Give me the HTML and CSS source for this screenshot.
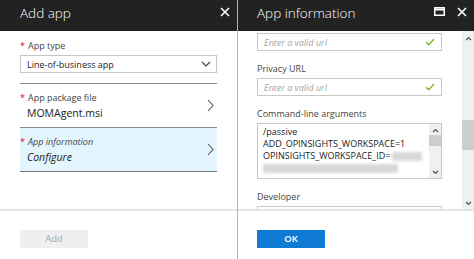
FILE: index.html
```html
<!DOCTYPE html>
<html lang="en">
<head>
  <meta charset="UTF-8" />
  <title>Add app</title>
  <link rel="stylesheet" href="styles.css">
</head>
<body>
  <div class="blades">
    <!-- left blade -->
    <div class="blade left">
      <div class="head">
        <span class="title">Add app</span>
        <span class="icons">
          <svg class="ico" width="10" height="10" viewBox="0 0 10 10"><path d="M1 1L9 9M9 1L1 9" stroke="#fff" stroke-width="1.6"/></svg>
        </span>
      </div>
      <div class="body">
        <div class="row first">
          <div class="lbl"><span class="req">*</span>App type</div>
          <div class="select">
            <span>Line-of-business app</span>
            <svg width="10" height="6" viewBox="0 0 10 6"><path d="M1 1L5 5L9 1" stroke="#444" stroke-width="1.2" fill="none"/></svg>
          </div>
        </div>
        <div class="row nav">
          <div class="txt">
            <div class="lbl"><span class="req">*</span>App package file</div>
            <div class="val">MOMAgent.msi</div>
          </div>
          <svg class="chev" width="7" height="13" viewBox="0 0 7 13"><path d="M1 1L6 6.5L1 12" stroke="#555" stroke-width="1.1" fill="none"/></svg>
        </div>
        <div class="row nav active">
          <div class="txt">
            <div class="lbl it"><span class="req">*</span>App information</div>
            <div class="val it">Configure</div>
          </div>
          <svg class="chev" width="7" height="13" viewBox="0 0 7 13"><path d="M1 1L6 6.5L1 12" stroke="#555" stroke-width="1.1" fill="none"/></svg>
        </div>
      </div>
      <div class="foot">
        <button class="btn off">Add</button>
      </div>
    </div>

    <!-- right blade -->
    <div class="blade right">
      <div class="head">
        <span class="title">App information</span>
        <span class="icons">
          <svg class="ico" width="11" height="9" viewBox="0 0 11 9"><rect x="0.75" y="0.75" width="9.5" height="7.5" stroke="#fff" stroke-width="1.5" fill="none"/><path d="M0.75 2.5H10.25" stroke="#fff" stroke-width="2"/></svg>
          <svg class="ico" width="10" height="10" viewBox="0 0 10 10"><path d="M1 1L9 9M9 1L1 9" stroke="#fff" stroke-width="1.6"/></svg>
        </span>
      </div>
      <div class="body">
        <div class="form">
          <div class="input">
            <span class="ph">Enter a valid url</span>
            <svg width="10" height="8" viewBox="0 0 10 8"><path d="M1 4.2L3.8 6.8L9 1" stroke="#7cb82f" stroke-width="1.4" fill="none"/></svg>
          </div>
          <div class="flbl">Privacy URL</div>
          <div class="input">
            <span class="ph">Enter a valid url</span>
            <svg width="10" height="8" viewBox="0 0 10 8"><path d="M1 4.2L3.8 6.8L9 1" stroke="#7cb82f" stroke-width="1.4" fill="none"/></svg>
          </div>
          <div class="flbl">Command-line arguments</div>
          <div class="area">
            <div class="lines">
              <div>/passive</div>
              <div>ADD_OPINSIGHTS_WORKSPACE=1</div>
              <div>OPINSIGHTS_WORKSPACE_ID=<span class="blur w1"></span></div>
              <div><span class="blur w2"></span></div>
            </div>
            <div class="sbar small">
              <svg width="7" height="5" viewBox="0 0 7 5"><path d="M1 4L3.5 1.5L6 4" stroke="#555" stroke-width="1.2" fill="none"/></svg>
              <div class="thumb"></div>
              <div class="fill"></div>
              <svg width="7" height="5" viewBox="0 0 7 5"><path d="M1 1L3.5 3.5L6 1" stroke="#555" stroke-width="1.2" fill="none"/></svg>
            </div>
          </div>
          <div class="flbl">Developer</div>
          <div class="input"></div>
        </div>
        <div class="sbar big">
          <svg width="7" height="5" viewBox="0 0 7 5"><path d="M1 4L3.5 1.5L6 4" stroke="#555" stroke-width="1.2" fill="none"/></svg>
          <div class="gap"></div>
          <div class="thumb"></div>
          <div class="fill"></div>
          <svg width="7" height="5" viewBox="0 0 7 5"><path d="M1 1L3.5 3.5L6 1" stroke="#555" stroke-width="1.2" fill="none"/></svg>
        </div>
      </div>
      <div class="foot">
        <button class="btn ok">OK</button>
      </div>
    </div>
  </div>
</body>
</html>
```

FILE: styles.css
```css
body {
  margin: 0;
  font-family: "Open Sans", "Noto Sans", sans-serif;
  background: #fff;
  color: #333;
}
.blades {
  display: flex;
  height: 259px;
}
.blade {
  display: flex;
  flex-direction: column;
  height: 259px;
}
.blade.left {
  width: 237px;
  border-right: 1px solid #b4b4b4;
}
.blade.right {
  flex: 1;
}
.head {
  height: 31px;
  background: #222;
  display: flex;
  align-items: center;
  justify-content: space-between;
  padding: 0 7px 0 20px;
  box-sizing: border-box;
}
.blade.right .head {
  padding-left: 19px;
}
.title {
  color: #fff;
  font-size: 13.5px;
  font-weight: 300;
  margin-top: -6px;
}
.icons {
  display: flex;
  align-items: center;
  gap: 12px;
  margin-top: -8px;
}
.body {
  height: 178px;
  overflow: hidden;
  box-sizing: border-box;
}
.blade.left .body {
  padding: 4px 20px 0 20px;
}
.foot {
  flex: 1;
  border-top: 2px solid #e4e4e4;
  padding: 14px 0 0 20px;
}
.blade.right .foot {
  padding-left: 19px;
}
.btn {
  width: 68px;
  height: 18px;
  border: none;
  font-family: inherit;
  font-size: 9.5px;
  padding: 0;
}
.btn.off {
  background: #efefef;
  color: #a8a8a8;
}
.btn.ok {
  background: #0f7bd5;
  color: #fff;
  font-weight: 600;
}

/* left rows */
.row {
  border-bottom: 1px solid #8c8c8c;
}
.row.first {
  padding: 4px 0 10px;
}
.lbl {
  font-size: 9px;
  color: #444;
  line-height: 14px;
}
.req {
  color: #d0021b;
  display: inline-block;
  width: 8px;
  font-style: normal;
}
.select {
  margin-top: 2px;
  height: 18px;
  border: 1px solid #c6c6c6;
  box-sizing: border-box;
  display: flex;
  align-items: center;
  justify-content: space-between;
  padding: 0 5px 0 6px;
  font-size: 9px;
  color: #222;
}
.row.nav {
  height: 44px;
  box-sizing: border-box;
  display: flex;
  align-items: center;
  justify-content: space-between;
  padding: 0 3px 0 0;
}
.row.nav .val {
  font-size: 10.5px;
  color: #222;
  padding-left: 7px;
  line-height: 16px;
}
.row.active {
  background: #e3f5fd;
  border-bottom-color: #777;
}
.it {
  font-style: italic;
}

/* right form */
.blade.right .body {
  display: flex;
  justify-content: space-between;
}
.form {
  width: 185px;
  padding: 2px 0 0 19px;
}
.input {
  height: 18px;
  border: 1px solid #c9c9c9;
  box-sizing: border-box;
  display: flex;
  align-items: center;
  justify-content: space-between;
  padding: 0 6px 0 6px;
}
.ph {
  font-size: 9px;
  font-style: italic;
  color: #a4a4a4;
}
.flbl {
  font-size: 9px;
  color: #444;
  margin: 11px 0 2px;
  line-height: 14px;
}
.area {
  height: 56px;
  border: 1px solid #c6c6c6;
  box-sizing: border-box;
  display: flex;
  justify-content: space-between;
  padding: 0 0 0 5px;
}
.lines {
  font-size: 9px;
  line-height: 12px;
  color: #222;
  padding-top: 2px;
  white-space: nowrap;
}
.blur {
  display: inline-block;
  height: 9px;
  background: #d8d8d8;
  filter: blur(1.5px);
  vertical-align: middle;
}
.blur.w1 { width: 30px; margin-left: 2px; }
.blur.w2 { width: 135px; }
.sbar {
  display: flex;
  flex-direction: column;
  align-items: center;
  background: #f0f0f0;
}
.sbar svg {
  flex: none;
}
.sbar.small {
  width: 12px;
}
.sbar.small svg:first-child {
  margin: 4px 0 2px;
}
.sbar.small svg:last-child {
  margin: 0 0 3px;
}
.sbar.small .thumb {
  width: 12px;
  height: 11px;
  background: #cdcdcd;
}
.sbar .fill {
  flex: 1;
}
.sbar.big {
  width: 12px;
  height: 178px;
}
.sbar.big svg:first-child {
  margin: 5px 0 3px;
}
.sbar.big svg:last-child {
  margin: 0 0 3px;
}
.sbar.big .gap {
  height: 76px;
}
.sbar.big .thumb {
  width: 12px;
  height: 30px;
  background: #cdcdcd;
}
```
